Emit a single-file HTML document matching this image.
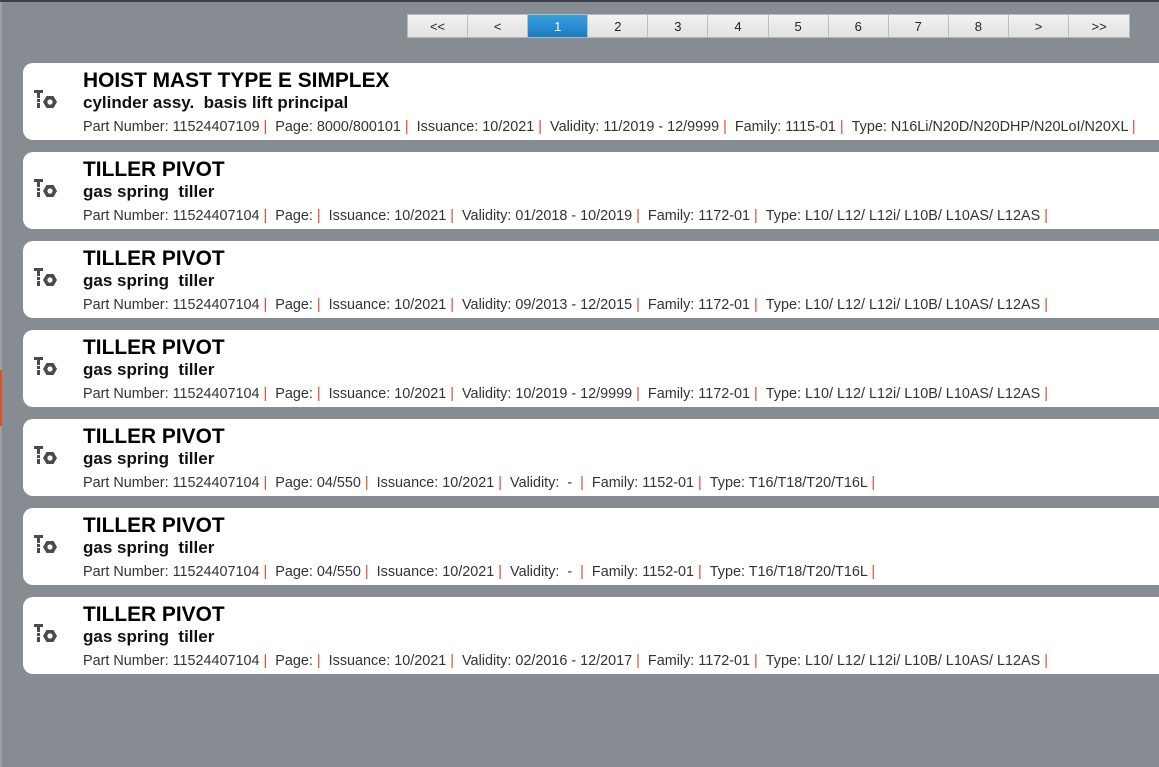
<!DOCTYPE html>
<html><head><meta charset="utf-8"><style>
*{margin:0;padding:0;box-sizing:border-box}
body{width:1159px;height:767px;background:#868c92;font-family:"Liberation Sans",Arial,sans-serif;position:relative;overflow:hidden}
.top{position:absolute;left:0;top:0;width:1159px;height:2px;background:#3a4048}
.ledge{position:absolute;left:0;top:2px;width:2px;height:765px;background:#9aa0a6}
.orange{position:absolute;left:0;top:370px;width:2px;height:56px;background:#d9542a}
.pg{position:absolute;left:407px;top:14px;display:flex;height:24px;border:1px solid #b5b9bd}
.pg div{width:60.1px;height:22px;background:linear-gradient(#f2f2f2,#e2e2e2);border-right:1px solid #b9bdc1;font-size:13px;color:#222;text-align:center;line-height:23px}
.pg div:last-child{border-right:none}
.pg .on{background:linear-gradient(#3aa0df,#1a7cc0);color:#fff}
.card{position:absolute;left:23px;width:1136px;height:77px;background:#fff;border-radius:10px 0 0 10px}
.ic{position:absolute;left:10px;top:26px}
.t1{position:absolute;left:60px;top:6px;font-size:20.9px;font-weight:bold;color:#000}
.t2{position:absolute;left:60px;top:30px;font-size:17px;font-weight:bold;color:#111}
.t3{position:absolute;left:60px;top:56px;font-size:14.4px;color:#333;white-space:nowrap}
.s{color:#e04a2a}
</style></head><body>
<div class="top"></div><div class="ledge"></div><div class="orange"></div>
<div class="pg"><div>&lt;&lt;</div><div>&lt;</div><div class="on">1</div><div>2</div><div>3</div><div>4</div><div>5</div><div>6</div><div>7</div><div>8</div><div>&gt;</div><div>&gt;&gt;</div></div>
<script>
const rows=[
["HOIST MAST TYPE E SIMPLEX","cylinder assy.&nbsp; basis lift principal","11524407109","8000/800101","10/2021","11/2019 - 12/9999","1115-01","N16Li/N20D/N20DHP/N20LoI/N20XL"],
["TILLER PIVOT","gas spring&nbsp; tiller","11524407104","","10/2021","01/2018 - 10/2019","1172-01","L10/ L12/ L12i/ L10B/ L10AS/ L12AS"],
["TILLER PIVOT","gas spring&nbsp; tiller","11524407104","","10/2021","09/2013 - 12/2015","1172-01","L10/ L12/ L12i/ L10B/ L10AS/ L12AS"],
["TILLER PIVOT","gas spring&nbsp; tiller","11524407104","","10/2021","10/2019 - 12/9999","1172-01","L10/ L12/ L12i/ L10B/ L10AS/ L12AS"],
["TILLER PIVOT","gas spring&nbsp; tiller","11524407104","04/550","10/2021","&nbsp;-&nbsp;","1152-01","T16/T18/T20/T16L"],
["TILLER PIVOT","gas spring&nbsp; tiller","11524407104","04/550","10/2021","&nbsp;-&nbsp;","1152-01","T16/T18/T20/T16L"],
["TILLER PIVOT","gas spring&nbsp; tiller","11524407104","","10/2021","02/2016 - 12/2017","1172-01","L10/ L12/ L12i/ L10B/ L10AS/ L12AS"]];
const sep='<span class="s"> | </span>&nbsp;';
let h='';
rows.forEach((r,i)=>{
h+=`<div class="card" style="top:${63+i*89}px"><svg class="ic" width="26" height="20" viewBox="0 0 26 20"><rect x="1" y="1" width="9" height="3" fill="#4a4a4a"/><rect x="4" y="4" width="3" height="15" fill="#4a4a4a"/><rect x="4" y="9" width="3" height="1" fill="#fff"/><rect x="4" y="13" width="3" height="1" fill="#fff"/><polygon points="10,13 13.5,7 20.5,7 24,13 20.5,19 13.5,19" fill="#4a4a4a"/><circle cx="17" cy="13" r="2.6" fill="#fff"/></svg>
<div class="t1">${r[0]}</div><div class="t2">${r[1]}</div>
<div class="t3">Part Number: ${r[2]}${sep}Page: ${r[3]}${sep}Issuance: ${r[4]}${sep}Validity: ${r[5]}${sep}Family: ${r[6]}${sep}Type: ${r[7]}<span class="s"> |</span></div></div>`;});
document.write(h);
</script>
</body></html>
